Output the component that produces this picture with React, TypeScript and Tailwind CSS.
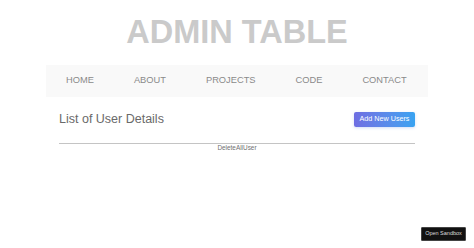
import React from "react";

export default function App() {
  const nav = ["HOME", "ABOUT", "PROJECTS", "CODE", "CONTACT"];
  return (
    <div
      className="min-h-[248px] w-full bg-white"
      style={{ fontFamily: '"Liberation Sans", Arial, sans-serif' }}
    >
      <div className="mx-auto w-[382px] pt-[16px]">
        <h1 className="text-center text-[32.5px] font-bold leading-none text-[#cacaca]">
          ADMIN TABLE
        </h1>
        <nav className="mt-[16px] flex h-[32px] items-center bg-[#f9f9f9] px-[20px]">
          {nav.map((n, i) => (
            <span
              key={n}
              className={`text-[9.3px] leading-none text-[#8a8a8a] ${i > 0 ? "ml-[40px]" : ""}`}
            >
              {n}
            </span>
          ))}
        </nav>
        <div className="px-[13px]">
          <div className="mt-[15px] flex h-[15px] items-center justify-between">
            <h2 className="text-[12.5px] leading-none text-[#6a6a6a]">List of User Details</h2>
            <button className="flex h-[15px] w-[61px] items-center justify-center rounded-[2px] bg-gradient-to-r from-[#6e6ee2] to-[#37a3f1] text-[7.2px] leading-none text-white shadow-[0_1px_3px_rgba(80,120,220,0.25)]">
              Add New Users
            </button>
          </div>
          <div className="mt-[16px] border-t border-[#c4c4c4] text-center text-[6.4px] leading-[8px] text-[#707070]">
            DeleteAllUser
          </div>
        </div>
      </div>
      <div className="fixed bottom-[7px] right-[8px] flex h-[14px] w-[45px] items-center justify-center rounded-[1px] border border-[#444] bg-[#111] text-[5.5px] leading-none text-[#ddd]">
        Open Sandbox
      </div>
    </div>
  );
}
